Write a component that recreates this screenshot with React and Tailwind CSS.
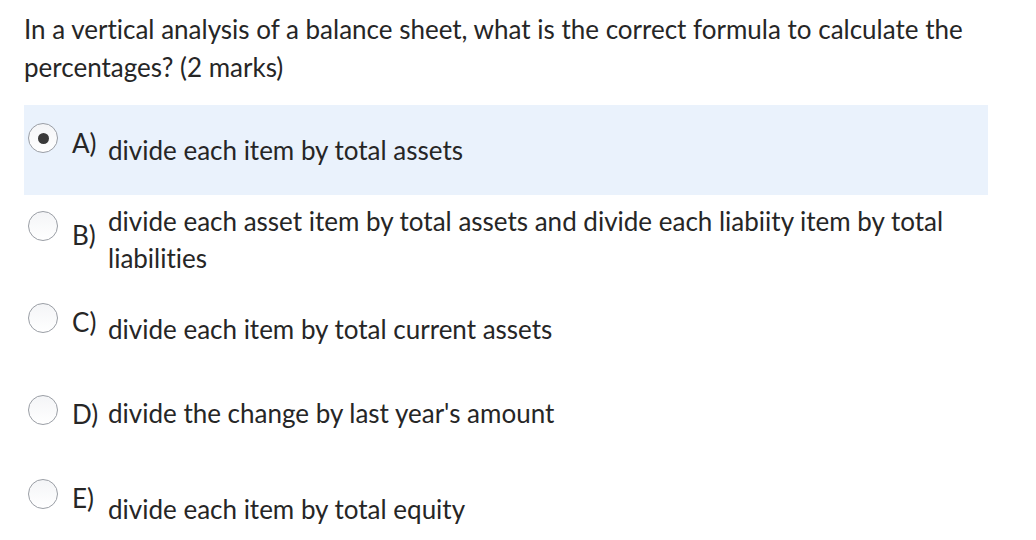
import React from "react";

const options = [
  { key: "A", text: "divide each item by total assets", selected: true, h: "h-[90px]", radio: "mt-[18px]", letter: "mt-[23px]", body: "mt-[27px]" },
  { key: "B", text: "divide each asset item by total assets and divide each liabiity item by total liabilities", h: "h-[90px]", radio: "mt-[16px]", letter: "mt-[25px]", body: "mt-[8px]" },
  { key: "C", text: "divide each item by total current assets", h: "h-[90px]", radio: "mt-[18px]", letter: "mt-[22px]", body: "mt-[26px]" },
  { key: "D", text: "divide the change by last year's amount", h: "h-[85px]", radio: "mt-[20px]", letter: "mt-[24px]", body: "mt-[20px]" },
  { key: "E", text: "divide each item by total equity", h: "h-[80px]", radio: "mt-[19px]", letter: "mt-[23px]", body: "mt-[31px]" },
];

function Radio({ checked }) {
  return (
    <span className="flex h-[30px] w-[30px] shrink-0 items-center justify-center rounded-full border border-[#9a9ea5] bg-gradient-to-b from-[#f4f5f7] to-white">
      {checked && <span className="h-[11px] w-[11px] rounded-full bg-[#3a3a3a]" />}
    </span>
  );
}

export default function App() {
  return (
    <div
      className="h-[540px] w-[1036px] overflow-hidden bg-white text-[#262626]"
      style={{ fontFamily: "Lato, 'Open Sans', sans-serif", fontVariantLigatures: "none" }}
    >
      <div className="px-[24px] pt-[10px] text-[26px] leading-[38px]">
        <p className="w-[980px]">
          In a vertical analysis of a balance sheet, what is the correct formula to calculate the percentages? (2 marks)
        </p>
      </div>
      <div className="ml-[24px] mt-[19px] w-[964px]">
        {options.map((o) => (
          <div key={o.key} className={`flex ${o.h} ${o.selected ? "bg-[#eaf2fc]" : ""}`}>
            <div className={`ml-[4px] ${o.radio}`}>
              <Radio checked={o.selected} />
            </div>
            <span className={`ml-[14px] w-[36px] shrink-0 text-[26px] leading-[30px] ${o.letter}`}>{o.key})</span>
            <p className={`w-[850px] text-[26px] leading-[37px] ${o.body}`}>{o.text}</p>
          </div>
        ))}
      </div>
    </div>
  );
}
